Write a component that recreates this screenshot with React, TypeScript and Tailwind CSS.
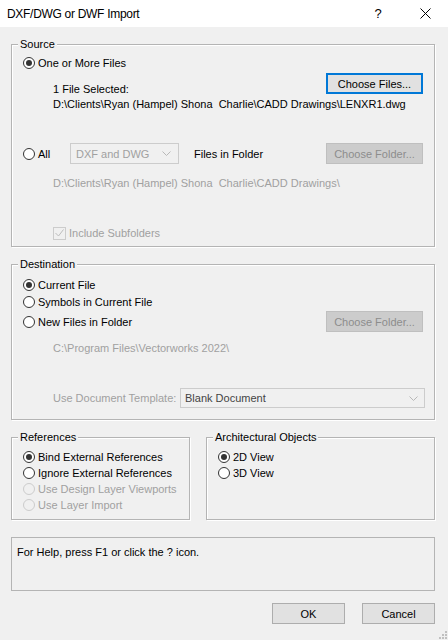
import React from 'react';

const Radio = ({ checked = false, disabled = false }: { checked?: boolean; disabled?: boolean }) => (
  <span
    className={`flex h-[12px] w-[12px] shrink-0 items-center justify-center rounded-full border ${
      disabled ? 'border-[#cccccc] bg-[#f0f0f0]' : 'border-[#333333] bg-white'
    }`}
  >
    {checked && <span className="h-[6px] w-[6px] rounded-full bg-[#333333]" />}
  </span>
);

const RadioRow = ({
  label,
  checked,
  disabled,
  className = '',
}: {
  label: string;
  checked?: boolean;
  disabled?: boolean;
  className?: string;
}) => (
  <div className={`flex h-[16px] items-center gap-[3px] ${className}`}>
    <Radio checked={checked} disabled={disabled} />
    <span className={disabled ? 'text-[#a0a0a0]' : ''}>{label}</span>
  </div>
);

const Chevron = () => (
  <svg width="9" height="5" viewBox="0 0 9 5" className="shrink-0">
    <polyline points="0.5,0.5 4.5,4.5 8.5,0.5" fill="none" stroke="#b8b8b8" strokeWidth="1" />
  </svg>
);

const Button = ({ label, variant = 'normal' }: { label: string; variant?: 'normal' | 'focus' | 'disabled' }) => {
  const styles = {
    normal: 'border border-[#adadad] bg-[#e1e1e1] text-black',
    focus: 'border-2 border-[#0078d7] bg-[#e1e1e1] text-black',
    disabled: 'border border-[#bfbfbf] bg-[#cccccc] text-[#8d8d8d]',
  }[variant];
  return (
    <div className={`flex h-[21px] w-[97px] shrink-0 items-center justify-center ${styles}`}>{label}</div>
  );
};

const Group = ({
  title,
  className = '',
  children,
}: {
  title: string;
  className?: string;
  children: React.ReactNode;
}) => (
  <div className={`relative border border-[#b4b4b4] shadow-[inset_1px_1px_0_#ffffff,1px_1px_0_#ffffff] ${className}`}>
    <span className="absolute left-[6px] top-[-8px] bg-[#f0f0f0] px-[2px] leading-[14px]">{title}</span>
    {children}
  </div>
);

export default function App() {
  return (
    <div className="relative flex h-[640px] w-[448px] flex-col overflow-hidden bg-[#f0f0f0] font-['Liberation_Sans',Arial,sans-serif] text-[11px] leading-[14px] text-black">
      {/* title bar */}
      <div className="flex h-[27px] shrink-0 items-center bg-white pl-[7px] text-[12px] tracking-[-0.3px]">
        <span className="flex-1">DXF/DWG or DWF Import</span>
        <span className="w-[10px] text-center text-[13px]">?</span>
        <svg width="11" height="11" viewBox="0 0 11 11" className="ml-[37px] mr-[17px]">
          <path d="M0.5 0.5 L10.5 10.5 M10.5 0.5 L0.5 10.5" stroke="#000" strokeWidth="1" />
        </svg>
      </div>

      <div className="flex flex-col pl-[11px] pr-[13px]">
        {/* Source */}
        <Group title="Source" className="mt-[17px] h-[203px]">
          <RadioRow label="One or More Files" checked className="ml-[11px] mt-[10px]" />
          <div className="flex items-start justify-between">
            <span className="ml-[41px] mt-[11px]">1 File Selected:</span>
            <div className="mr-[11px] mt-[2px]">
              <Button label="Choose Files..." variant="focus" />
            </div>
          </div>
          <div className="ml-[41px] mt-[1px] whitespace-pre">
            {'D:\\Clients\\Ryan (Hampel) Shona  Charlie\\CADD Drawings\\LENXR1.dwg'}
          </div>
          <div className="mt-[32px] flex h-[21px] items-center">
            <RadioRow label="All" className="ml-[11px] w-[47px]" />
            <div className="flex h-[21px] w-[109px] items-center justify-between border border-[#cccccc] bg-[#f0f0f0] pl-[5px] pr-[7px] text-[#a0a0a0]">
              <span>DXF and DWG</span>
              <Chevron />
            </div>
            <span className="ml-[15px]">Files in Folder</span>
            <div className="ml-auto mr-[11px]">
              <Button label="Choose Folder..." variant="disabled" />
            </div>
          </div>
          <div className="ml-[41px] mt-[12px] whitespace-pre text-[#a0a0a0]">
            {'D:\\Clients\\Ryan (Hampel) Shona  Charlie\\CADD Drawings\\'}
          </div>
          <div className="ml-[41px] mt-[36px] flex h-[14px] items-center gap-[3px] text-[#a0a0a0]">
            <span className="flex h-[13px] w-[13px] items-center justify-center border border-[#cccccc]">
              <svg width="9" height="8" viewBox="0 0 9 8">
                <polyline points="0.5,4 3.5,7 8.5,0.5" fill="none" stroke="#bcbcbc" strokeWidth="1" />
              </svg>
            </span>
            <span>Include Subfolders</span>
          </div>
        </Group>

        {/* Destination */}
        <Group title="Destination" className="mt-[17px] h-[156px]">
          <RadioRow label="Current File" checked className="ml-[11px] mt-[12px]" />
          <RadioRow label="Symbols in Current File" className="ml-[11px] mt-[1px]" />
          <div className="mt-[1px] flex h-[21px] items-center justify-between">
            <RadioRow label="New Files in Folder" className="ml-[11px]" />
            <div className="mr-[11px]">
              <Button label="Choose Folder..." variant="disabled" />
            </div>
          </div>
          <div className="ml-[41px] mt-[9px] text-[#a0a0a0]">{'C:\\Program Files\\Vectorworks 2022\\'}</div>
          <div className="mt-[33px] flex h-[20px] items-center">
            <span className="ml-[41px] text-[#a0a0a0]">Use Document Template:</span>
            <div className="ml-auto mr-[9px] flex h-[20px] w-[245px] items-center justify-between border border-[#cccccc] bg-[#f0f0f0] pl-[4px] pr-[6px] text-[#444444]">
              <span>Blank Document</span>
              <Chevron />
            </div>
          </div>
        </Group>

        {/* References / Architectural Objects */}
        <div className="mt-[17px] flex gap-[16px]">
          <Group title="References" className="h-[83px] w-[179px]">
            <div className="ml-[11px] mt-[11px] flex flex-col">
              <RadioRow label="Bind External References" checked />
              <RadioRow label="Ignore External References" />
              <RadioRow label="Use Design Layer Viewports" disabled />
              <RadioRow label="Use Layer Import" disabled />
            </div>
          </Group>
          <Group title="Architectural Objects" className="h-[83px] flex-1">
            <div className="ml-[11px] mt-[11px] flex flex-col">
              <RadioRow label="2D View" checked />
              <RadioRow label="3D View" />
            </div>
          </Group>
        </div>

        {/* Help */}
        <div className="mt-[17px] h-[54px] border border-[#b4b4b4] pl-[5px] pt-[7px]">
          For Help, press F1 or click the ? icon.
        </div>

        {/* Buttons */}
        <div className="mt-[12px] flex justify-end gap-[17px]">
          <div className="flex h-[21px] w-[73px] items-center justify-center border border-[#adadad] bg-[#e1e1e1]">OK</div>
          <div className="flex h-[21px] w-[73px] items-center justify-center border border-[#adadad] bg-[#e1e1e1]">Cancel</div>
        </div>
      </div>

      {/* resize grip */}
      <svg width="10" height="10" viewBox="0 0 10 10" className="absolute bottom-[1px] right-[1px]">
        {[
          [8, 2],
          [5, 5],
          [8, 5],
          [2, 8],
          [5, 8],
          [8, 8],
        ].map(([x, y]) => (
          <rect key={`${x}-${y}`} x={x} y={y} width="2" height="2" fill="#c0c0c0" />
        ))}
      </svg>
    </div>
  );
}
